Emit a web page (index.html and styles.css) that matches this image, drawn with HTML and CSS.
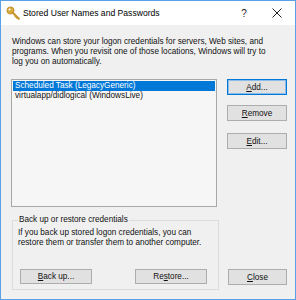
FILE: index.html
```html
<!DOCTYPE html>
<html>
<head>
<meta charset="utf-8">
<link rel="stylesheet" href="styles.css">
</head>
<body>
<div class="window">
  <div class="titlebar">
    <svg class="key" width="14" height="14" viewBox="0 0 14 14">
      <circle cx="4.5" cy="4.5" r="3.6" fill="#d9a93a" stroke="#b8862a" stroke-width="0.8"/>
      <circle cx="3.6" cy="3.6" r="1" fill="#fff"/>
      <path d="M6.8 6.8 L12.8 12.8" stroke="#c8962f" stroke-width="2.2" stroke-linecap="round"/>
      <path d="M10 10 L8.8 11.2 M11.5 11.5 L10.4 12.6" stroke="#c8962f" stroke-width="1.4"/>
    </svg>
    <span class="title">Stored User Names and Passwords</span>
    <span class="help">?</span>
    <svg class="close-x" width="10" height="10" viewBox="0 0 10 10"><path d="M0.5 0.5 L9.5 9.5 M9.5 0.5 L0.5 9.5" stroke="#222" stroke-width="1"/></svg>
  </div>
  <div class="content">
    <p class="intro">Windows can store your logon credentials for servers, Web sites, and programs. When you revisit one of those locations, Windows will try to log you on automatically.</p>
    <div class="main">
      <div class="list">
        <div class="item selected">Scheduled Task (LegacyGeneric)</div>
        <div class="item">virtualapp/didlogical (WindowsLive)</div>
      </div>
      <div class="side">
        <button class="btn default"><u>A</u>dd...</button>
        <button class="btn"><u>R</u>emove</button>
        <button class="btn edit"><u>E</u>dit...</button>
      </div>
    </div>
    <div class="bottom">
      <fieldset class="group">
        <legend>Back up or restore credentials</legend>
        <p class="group-text">If you back up stored logon credentials, you can restore them or transfer them to another computer.</p>
        <div class="group-buttons">
          <button class="btn wide"><u>B</u>ack up...</button>
          <button class="btn wide">Re<u>s</u>tore...</button>
        </div>
      </fieldset>
      <button class="btn close"><u>C</u>lose</button>
    </div>
  </div>
</div>
</body>
</html>
```

FILE: styles.css
```css
* { box-sizing: border-box; }
html, body { margin: 0; padding: 0; }
body { width: 296px; height: 300px; font-family: "Liberation Sans", Arial, sans-serif; font-size: 8.2px; color: #111; }
.window {
  width: 296px; height: 300px;
  border: 1px solid #5aa0e6;
  background: #f0f0f0;
  display: flex; flex-direction: column;
}
.titlebar {
  height: 24px; background: #fff;
  display: flex; align-items: center;
  padding-left: 5px;
}
.key { flex: none; }
.title { margin-left: 3px; font-size: 8.6px; color: #000; flex: 1; }
.help { font-size: 10px; width: 10px; text-align: center; margin-right: 23px; color: #222; }
.close-x { margin-right: 13px; }
.content { flex: 1; padding: 12px 8px 0 10px; display: flex; flex-direction: column; }
.intro { margin: 0 0 0 1px; line-height: 10px; width: 265px; }
.main { display: flex; margin-top: 12px; }
.list {
  width: 206px; height: 128px;
  border: 1px solid #a8a8a8; background: #f6f6f6;
  padding: 1px;
}
.item { height: 10px; line-height: 10px; padding-left: 2px; white-space: nowrap; }
.item.selected { background: #0078d7; color: #fff; }
.side { display: flex; flex-direction: column; margin-left: 10px; }
.btn {
  font-family: inherit; font-size: 8.2px; color: #111;
  width: 60px; height: 16px; padding: 0;
  background: #e1e1e1; border: 1px solid #adadad;
  margin: 0;
}
.btn.default { border-color: #0078d7; box-shadow: inset 0 0 0 1px #8cbbe8; }
.side .btn + .btn { margin-top: 10px; }
.side .btn.edit { margin-top: 12px; }
.bottom { display: flex; align-items: flex-end; margin-top: 8px; }
.group {
  margin: 0 0 0 1px; padding: 0 0 5px 5px;
  width: 207px; height: 75px;
  border: 1px solid #dcdcdc;
  min-width: 0;
}
.group legend { padding: 0 1px; margin-left: 0; line-height: 10px; }
.group-text { margin: 3px 0 0 0; line-height: 10px; }
.group-buttons { display: flex; margin-top: 21px; padding-left: 2px; }
.btn.wide { width: 72px; height: 15px; }
.btn.wide + .btn.wide { margin-left: 43px; }
.btn.close { margin-left: 9px; margin-bottom: 5px; width: 59px; height: 16px; }
```
